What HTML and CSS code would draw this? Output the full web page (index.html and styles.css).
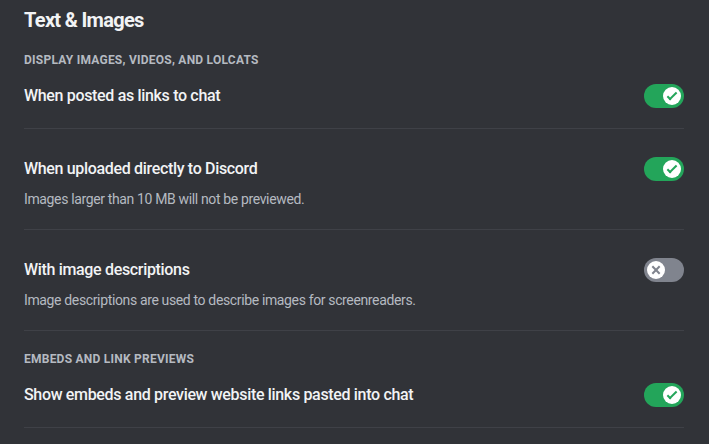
FILE: index.html
```html
<!DOCTYPE html>
<html>
<head>
<meta charset="utf-8">
<link rel="stylesheet" href="styles.css">
</head>
<body>
<main class="page">
  <h2 class="title">Text &amp; Images</h2>

  <section class="group">
    <h3 class="group-header">Display images, videos, and lolcats</h3>

    <div class="item">
      <div class="item-row">
        <span class="item-label">When posted as links to chat</span>
        <span class="toggle on">
          <svg class="knob" viewBox="0 0 20 20"><circle cx="10" cy="10" r="10" fill="#fff"/><path fill="#23a55a" d="M7.89561 14.8538L6.30462 13.2629L14.3099 5.25755L15.9009 6.84854L7.89561 14.8538Z"/><path fill="#23a55a" d="M4.08643 11.0903L5.67742 9.49929L9.4485 13.2704L7.85751 14.8614L4.08643 11.0903Z"/></svg>
        </span>
      </div>
    </div>

    <div class="item">
      <div class="item-row">
        <span class="item-label">When uploaded directly to Discord</span>
        <span class="toggle on">
          <svg class="knob" viewBox="0 0 20 20"><circle cx="10" cy="10" r="10" fill="#fff"/><path fill="#23a55a" d="M7.89561 14.8538L6.30462 13.2629L14.3099 5.25755L15.9009 6.84854L7.89561 14.8538Z"/><path fill="#23a55a" d="M4.08643 11.0903L5.67742 9.49929L9.4485 13.2704L7.85751 14.8614L4.08643 11.0903Z"/></svg>
        </span>
      </div>
      <p class="item-note">Images larger than 10 MB will not be previewed.</p>
    </div>

    <div class="item">
      <div class="item-row">
        <span class="item-label">With image descriptions</span>
        <span class="toggle off">
          <svg class="knob" viewBox="0 0 20 20"><circle cx="10" cy="10" r="10" fill="#fff"/><path fill="#80848e" d="M5.13231 6.72963L6.7233 5.13864L14.855 13.2704L13.264 14.8614L5.13231 6.72963Z"/><path fill="#80848e" d="M13.2704 5.13864L14.8614 6.72963L6.72963 14.8614L5.13864 13.2704L13.2704 5.13864Z"/></svg>
        </span>
      </div>
      <p class="item-note">Image descriptions are used to describe images for screenreaders.</p>
    </div>
  </section>

  <section class="group">
    <h3 class="group-header">Embeds and link previews</h3>

    <div class="item">
      <div class="item-row">
        <span class="item-label">Show embeds and preview website links pasted into chat</span>
        <span class="toggle on">
          <svg class="knob" viewBox="0 0 20 20"><circle cx="10" cy="10" r="10" fill="#fff"/><path fill="#23a55a" d="M7.89561 14.8538L6.30462 13.2629L14.3099 5.25755L15.9009 6.84854L7.89561 14.8538Z"/><path fill="#23a55a" d="M4.08643 11.0903L5.67742 9.49929L9.4485 13.2704L7.85751 14.8614L4.08643 11.0903Z"/></svg>
        </span>
      </div>
    </div>
  </section>
</main>
</body>
</html>
```

FILE: styles.css
```css
html, body {
  margin: 0;
  padding: 0;
  background: #313338;
  height: 100%;
  overflow: hidden;
}

body {
  font-family: Roboto, "Noto Sans", sans-serif;
  color: #f2f3f5;
}

.page {
  padding: 8px 25px 0 24px;
}

.title {
  margin: 0 0 20px;
  font-size: 20px;
  line-height: 24px;
  font-weight: 700;
  letter-spacing: -0.7px;
  color: #f2f3f5;
}

.group + .group {
  margin-top: 20px;
}

.group-header {
  margin: 0 0 16px;
  font-size: 12px;
  line-height: 16px;
  font-weight: 700;
  letter-spacing: 0.02em;
  text-transform: uppercase;
  color: #b5bac1;
}

.item {
  padding-bottom: 20px;
  border-bottom: 1px solid #3f4147;
}

.item + .item {
  margin-top: 28px;
}

.item-row {
  display: flex;
  align-items: center;
  justify-content: space-between;
  height: 24px;
}

.item-label {
  font-size: 16px;
  line-height: 24px;
  font-weight: 500;
  letter-spacing: -0.33px;
  color: #f2f3f5;
}

.item-note {
  margin: 8px 0 0;
  font-size: 14px;
  line-height: 20px;
  letter-spacing: -0.36px;
  color: #b5bac1;
}

.toggle {
  flex: none;
  display: flex;
  align-items: center;
  width: 40px;
  height: 24px;
  border-radius: 12px;
  box-sizing: border-box;
  padding: 3px;
}

.toggle.on {
  background: #23a55a;
  justify-content: flex-end;
}

.toggle.off {
  background: #80848e;
  justify-content: flex-start;
}

.knob {
  width: 18px;
  height: 18px;
  display: block;
}
```
